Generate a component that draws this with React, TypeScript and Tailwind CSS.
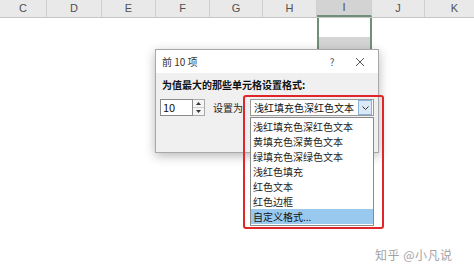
import React from 'react';

const FONT = { fontFamily: '"Noto Sans CJK SC", "Noto Sans", sans-serif' };

// column headers: letter + width (C is cut off at the left edge)
const columns: { name: string; w: string }[] = [
  { name: 'C', w: 'w-[47px]' },
  { name: 'D', w: 'w-[55px]' },
  { name: 'E', w: 'w-[54px]' },
  { name: 'F', w: 'w-[54px]' },
  { name: 'G', w: 'w-[53px]' },
  { name: 'H', w: 'w-[54px]' },
  { name: 'I', w: 'w-[55px]' },
  { name: 'J', w: 'w-[53px]' },
  { name: 'K', w: 'w-[60px]' },
];

const options = [
  '浅红填充色深红色文本',
  '黄填充色深黄色文本',
  '绿填充色深绿色文本',
  '浅红色填充',
  '红色文本',
  '红色边框',
  '自定义格式...',
];

const ColumnHeader: React.FC = () => (
  <div className="flex h-[18px] bg-[#e9e9e9] border-b border-[#c6c6c6]">
    {columns.map((c) => (
      <div
        key={c.name}
        className={`${c.w} shrink-0 flex items-center justify-center border-r border-[#d0d0d0] text-[11px] text-[#505050] ${
          c.name === 'I' ? 'bg-[#d3d3d3] border-b-2 border-b-[#6f8f7a]' : ''
        }`}
        style={{ fontFamily: '"Liberation Sans", sans-serif' }}
      >
        {c.name}
      </div>
    ))}
  </div>
);

const Dialog: React.FC = () => (
  <div className="absolute left-[155px] top-[49px] w-[224px] h-[104px] flex flex-col border border-[#a8a8a8] bg-[#f0f0f0] shadow-[0_3px_10px_rgba(0,0,0,0.28)]">
    {/* Title bar */}
    <div className="h-[23px] bg-white flex items-center pl-[6px] text-[10px] text-[#333]">
      <span className="flex-1">前 10 项</span>
      <span className="w-[20px] text-center text-[10px] text-[#555]">?</span>
      <span className="w-[36px] flex justify-center">
        <svg width="10" height="10" viewBox="0 0 10 10">
          <path d="M1 1 L9 9 M9 1 L1 9" stroke="#555" strokeWidth="1" />
        </svg>
      </span>
    </div>

    {/* Body */}
    <div className="flex-1 pl-[6px] pr-[4px] pt-[5px]">
      <div className="text-[10px] font-bold text-[#111] leading-[14px] whitespace-nowrap">为值最大的那些单元格设置格式:</div>
      <div className="mt-[7px] flex items-center h-[17px]">
        <div className="ml-[-2px] shrink-0 w-[33px] h-[17px] bg-white border border-[#8a8a8a] flex items-center pl-[2px] text-[11px] text-[#111]">
          10
        </div>
        <div className="shrink-0 w-[12px] h-[17px] flex flex-col border border-l-0 border-[#aaa] bg-[#f5f5f5]">
          <div className="flex-1 flex items-center justify-center border-b border-[#ccc]">
            <svg width="5" height="3" viewBox="0 0 5 3"><path d="M0 3 L2.5 0 L5 3 Z" fill="#333" /></svg>
          </div>
          <div className="flex-1 flex items-center justify-center">
            <svg width="5" height="3" viewBox="0 0 5 3"><path d="M0 0 L2.5 3 L5 0 Z" fill="#333" /></svg>
          </div>
        </div>
        <span className="ml-[8px] shrink-0 whitespace-nowrap text-[10px] text-[#222]">设置为</span>
        <div className="ml-auto shrink-0 w-[124px] h-[17px] bg-white border border-[#9a9a9a] flex items-center">
          <span className="flex-1 pl-[3px] text-[10px] text-[#111] whitespace-nowrap">浅红填充色深红色文本</span>
          <div className="w-[14px] h-[15px] mr-[1px] bg-[#dbe8f6] border border-[#88b3df] flex items-center justify-center">
            <svg width="7" height="4" viewBox="0 0 7 4"><path d="M0.5 0.5 L3.5 3.5 L6.5 0.5" stroke="#333" fill="none" strokeWidth="1" /></svg>
          </div>
        </div>
      </div>
    </div>
  </div>
);

const DropdownList: React.FC = () => (
  <div className="absolute left-[250px] top-[117px] w-[124px] bg-white border border-[#8a8a8a] py-[1px]">
    {options.map((o, i) => (
      <div
        key={o}
        className={`h-[15px] flex items-center pl-[2px] text-[10px] whitespace-nowrap ${
          i === options.length - 1 ? 'bg-[#99c9ef] text-[#111]' : 'text-[#222]'
        }`}
      >
        {o}
      </div>
    ))}
  </div>
);

export default function App() {
  return (
    <div className="relative w-[474px] h-[274px] overflow-hidden bg-white" style={FONT}>
      <ColumnHeader />

      {/* Selected range in column I */}
      <div className="flex">
        <div className="w-[317px] shrink-0" />
        <div className="w-[55px] border-x-2 border-[#6f8f7a]">
          <div className="h-[19px] bg-white" />
          <div className="h-[60px] bg-[#d4d4d4]" />
        </div>
      </div>

      <Dialog />
      <DropdownList />

      {/* Red annotation box */}
      <div className="absolute left-[243px] top-[95px] w-[141px] h-[134px] border-2 border-[#e0262b] rounded-[3px]" />

      {/* Watermark */}
      <div className="absolute left-[375px] top-[246px] text-[12px] text-[#a3a3a3] tracking-[0.5px]">知乎 @小凡说</div>
    </div>
  );
}
